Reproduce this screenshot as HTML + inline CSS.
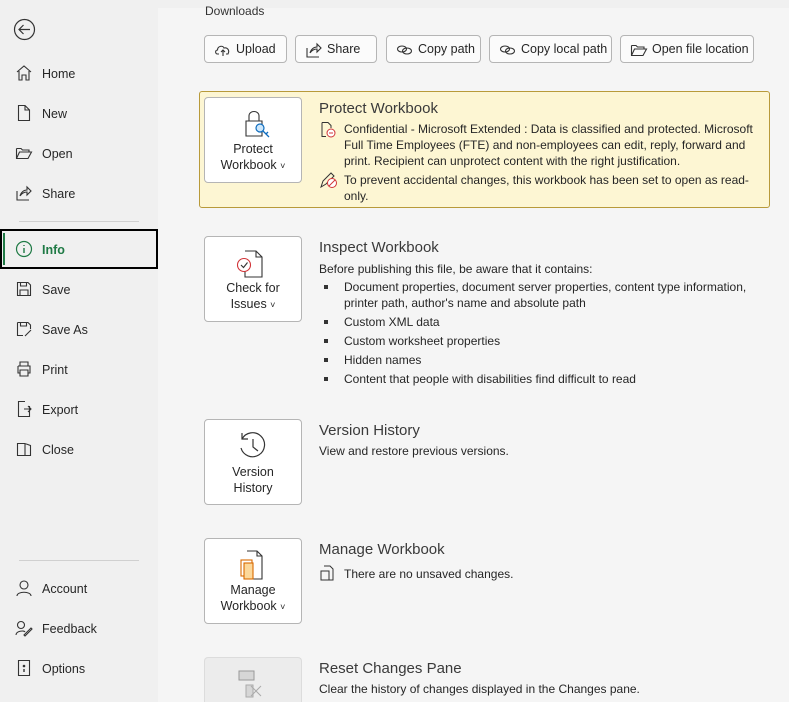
<!DOCTYPE html><html><head><style>
*{margin:0;padding:0;box-sizing:border-box}
html{width:789px;height:702px;overflow:hidden}
body{width:789px;height:702px;overflow:hidden;background:#f0f0f0;font-family:"Liberation Sans",sans-serif;color:#262626;position:relative}
.side{position:absolute;left:0;top:0;width:158px;height:702px;background:#f0f0f0}
.main{position:absolute;left:158px;top:8px;width:631px;height:694px;background:#f5f5f5}
.it{position:absolute;left:42px;font-size:12.5px}
.ic{position:absolute;left:15px}
.sep{position:absolute;left:19px;width:120px;height:1px;background:#d0d0d0}
.btn{position:absolute;top:35px;height:28px;border:1px solid #b5b5b5;border-radius:4px;background:#fbfbfb;font-size:12.5px;line-height:27px;padding-left:31px}
.btn svg{position:absolute;left:9px;top:6px}
.tile{position:absolute;left:204px;width:98px;height:86px;border:1px solid #b5b5b5;border-radius:4px;background:#fff;text-align:center;font-size:12.5px;line-height:16px}
.tile .lb{position:absolute;bottom:8px;left:0;right:0}
.cv{font-size:9px}
.t{position:absolute;left:319px;font-size:15px;color:#3a3a3a}
.p{position:absolute;left:319px;font-size:12px;line-height:16px}
.b{position:absolute;left:344px;font-size:12px;line-height:16px}
.dot{position:absolute;left:324px;width:4px;height:4px;background:#333}
</style></head><body>
<div class="side">
<svg style="position:absolute;left:13px;top:18px" width="23" height="23"><circle cx="11.5" cy="11.5" r="10" fill="none" stroke="#333" stroke-width="1.2"/><path d="M17 11.5H6M10.5 7L6 11.5L10.5 16" fill="none" stroke="#333" stroke-width="1.2"/></svg>
<svg class="ic" style="top:64px" width="18" height="18"><path d="M2 8L9 2L16 8M4 7V16H7V11H11V16H14V7" fill="none" stroke="#333" stroke-width="1.1"/></svg><div class="it" style="top:67px">Home</div>
<svg class="ic" style="top:104px" width="18" height="18"><path d="M3.5 1.5H10L14.5 6V16.5H3.5ZM10 1.5V6H14.5" fill="none" stroke="#333" stroke-width="1.1"/></svg><div class="it" style="top:107px">New</div>
<svg class="ic" style="top:144px" width="18" height="18"><path d="M1.5 4.5H6L7.5 6H14V8M1.5 4.5V14.5H13L16.5 8H4.5L1.5 14.5" fill="none" stroke="#333" stroke-width="1.1"/></svg><div class="it" style="top:147px">Open</div>
<svg class="ic" style="top:184px" width="18" height="18"><path d="M2 7V16H14M5 12C6 8 9 6 12 6V3L16 7L12 11V8C9 8 7 9 5 12" fill="none" stroke="#333" stroke-width="1.1"/></svg><div class="it" style="top:187px">Share</div>
<div class="sep" style="top:221px"></div>
<div style="position:absolute;left:0;top:229px;width:158px;height:40px;border:2px solid #000"></div>
<div style="position:absolute;left:3px;top:233px;width:2px;height:32px;background:#1f7a45"></div>
<svg class="ic" style="top:240px" width="18" height="18"><circle cx="9" cy="9" r="7.5" fill="none" stroke="#1f7a45" stroke-width="1.2"/><path d="M9 8V13M9 5V6" stroke="#1f7a45" stroke-width="1.4"/></svg><div class="it" style="top:243px;color:#1f7a45;font-weight:bold">Info</div>
<svg class="ic" style="top:280px" width="18" height="18"><path d="M2.5 2.5H13L15.5 5V15.5H2.5ZM5.5 2.5V6H11.5V2.5M5 15.5V10H13V15.5" fill="none" stroke="#333" stroke-width="1.1"/></svg><div class="it" style="top:283px">Save</div>
<svg class="ic" style="top:320px" width="18" height="18"><path d="M2.5 2.5H13L15.5 5V9M2.5 2.5V15.5H8M5.5 2.5V6H11.5V2.5M10 16L16 10" fill="none" stroke="#333" stroke-width="1.1"/></svg><div class="it" style="top:323px">Save As</div>
<svg class="ic" style="top:360px" width="18" height="18"><path d="M5 6V2H13V6M3 6H15V13H13M5 13H3V6M5 10H13V16H5Z" fill="none" stroke="#333" stroke-width="1.1"/></svg><div class="it" style="top:363px">Print</div>
<svg class="ic" style="top:400px" width="18" height="18"><path d="M10 1.5H3.5V16.5H14.5V6M9 9H16M13 6L16 9L13 12" fill="none" stroke="#333" stroke-width="1.1"/></svg><div class="it" style="top:403px">Export</div>
<svg class="ic" style="top:440px" width="18" height="18"><path d="M2.5 3.5H10V15.5H2.5ZM10 3.5L15.5 5.5V15.5H10" fill="none" stroke="#333" stroke-width="1.1"/></svg><div class="it" style="top:443px">Close</div>
<div class="sep" style="top:560px"></div>
<svg class="ic" style="top:579px" width="18" height="18"><circle cx="9" cy="6" r="4" fill="none" stroke="#333" stroke-width="1.1"/><path d="M2 17C2 12 16 12 16 17" fill="none" stroke="#333" stroke-width="1.1"/></svg><div class="it" style="top:582px">Account</div>
<svg class="ic" style="top:619px" width="18" height="18"><circle cx="6" cy="6" r="3.5" fill="none" stroke="#333" stroke-width="1.1"/><path d="M1 16C1 12 9 11 10 13M9 16L16 9L17 10L10 17Z" fill="none" stroke="#333" stroke-width="1.1"/></svg><div class="it" style="top:622px">Feedback</div>
<svg class="ic" style="top:659px" width="18" height="18"><path d="M3.5 1.5H14.5V16.5H3.5Z" fill="none" stroke="#333" stroke-width="1.1"/><circle cx="9" cy="7" r="1.3" fill="#333"/><path d="M9 10V13" stroke="#333" stroke-width="1.4"/></svg><div class="it" style="top:662px">Options</div>
</div>
<div class="main"></div>
<div style="position:absolute;left:205px;top:4px;font-size:12px;color:#333">Downloads</div>
<div class="btn" style="left:204px;width:83px"><svg width="18" height="16"><path d="M5 12H3.5C1 12 1 8 3.5 8C3.5 4 9 3 10 6C13 5 16 8 14 12H12M9 14V8M7 10L9 8L11 10" fill="none" stroke="#333" stroke-width="1.1"/></svg>Upload</div>
<div class="btn" style="left:295px;width:82px"><svg width="18" height="16"><path d="M2 6V15H14M5 11C6 7 9 5 12 5V2L16 6L12 10V7C9 7 7 8 5 11" fill="none" stroke="#333" stroke-width="1.1"/></svg>Share</div>
<div class="btn" style="left:386px;width:95px"><svg width="18" height="16"><ellipse cx="6" cy="7" rx="4.5" ry="3" fill="none" stroke="#333" stroke-width="1.1"/><ellipse cx="11" cy="9" rx="4.5" ry="3" fill="none" stroke="#333" stroke-width="1.1"/></svg>Copy path</div>
<div class="btn" style="left:489px;width:123px"><svg width="18" height="16"><ellipse cx="6" cy="7" rx="4.5" ry="3" fill="none" stroke="#333" stroke-width="1.1"/><ellipse cx="11" cy="9" rx="4.5" ry="3" fill="none" stroke="#333" stroke-width="1.1"/></svg>Copy local path</div>
<div class="btn" style="left:620px;width:134px"><svg width="18" height="16"><path d="M1.5 3.5H6L7.5 5H14V7M1.5 3.5V13.5H13L16.5 7H4.5L1.5 13.5" fill="none" stroke="#333" stroke-width="1.1"/></svg>Open file location</div>

<div style="position:absolute;left:199px;top:91px;width:571px;height:117px;background:#fdf6d3;border:1px solid #b89a3a;border-radius:3px"></div>
<div class="tile" style="top:97px"><svg style="position:absolute;left:37px;top:11px" width="32" height="32"><path d="M7 12V7C7 1 17 1 17 7V12M4 12H20V27H4Z" fill="none" stroke="#333" stroke-width="1.1"/><circle cx="18" cy="19" r="4" fill="#cde7fb" stroke="#0f6cbd" stroke-width="1.2"/><path d="M21 22L27 28M24 25L26 23" stroke="#0f6cbd" stroke-width="1.3"/></svg><div class="lb">Protect<br>Workbook <span class="cv">˅</span></div></div>
<div class="t" style="top:100px">Protect Workbook</div>
<svg style="position:absolute;left:320px;top:121px" width="18" height="18"><path d="M2 1.5H8L11 4.5V7M2 1.5V15.5H6" fill="none" stroke="#333" stroke-width="1"/><circle cx="11" cy="12" r="4" fill="#fff" stroke="#d13438"/><path d="M9 12H13" stroke="#d13438"/></svg>
<div class="b" style="top:121px;width:420px">Confidential - Microsoft Extended : Data is classified and protected. Microsoft Full Time Employees (FTE) and non-employees can edit, reply, forward and print. Recipient can unprotect content with the right justification.</div>
<svg style="position:absolute;left:319px;top:170px" width="20" height="20"><path d="M2 17L4 11L12 3L15 6L7 14Z" fill="none" stroke="#333" stroke-width="1"/><circle cx="13" cy="13" r="4.5" fill="#fff" stroke="#d13438"/><path d="M10 16L16 10" stroke="#d13438"/></svg>
<div class="b" style="top:172px;width:420px">To prevent accidental changes, this workbook has been set to open as read-only.</div>

<div class="tile" style="top:236px"><svg style="position:absolute;left:30px;top:12px" width="32" height="32"><path d="M10 2H21L27 8V28H10V20M21 2V8H27" fill="none" stroke="#333" stroke-width="1.1"/><circle cx="9" cy="16" r="6.5" fill="#fff" stroke="#d13438" stroke-width="1.1"/><path d="M6 16L8.5 18.5L12.5 13.5" fill="none" stroke="#333" stroke-width="1.1"/></svg><div class="lb">Check for<br>Issues <span class="cv">˅</span></div></div>
<div class="t" style="top:239px">Inspect Workbook</div>
<div class="p" style="top:261px">Before publishing this file, be aware that it contains:</div>
<div class="dot" style="top:285px"></div><div class="b" style="top:279px;width:420px">Document properties, document server properties, content type information, printer path, author's name and absolute path</div>
<div class="dot" style="top:320px"></div><div class="b" style="top:314px">Custom XML data</div>
<div class="dot" style="top:339px"></div><div class="b" style="top:333px">Custom worksheet properties</div>
<div class="dot" style="top:358px"></div><div class="b" style="top:352px">Hidden names</div>
<div class="dot" style="top:377px"></div><div class="b" style="top:371px">Content that people with disabilities find difficult to read</div>

<div class="tile" style="top:419px"><svg style="position:absolute;left:32px;top:10px" width="32" height="32"><path d="M5 9A12 12 0 1 1 4 18M5 3V9H11M16 9V17L21 21" fill="none" stroke="#333" stroke-width="1.2"/></svg><div class="lb">Version<br>History</div></div>
<div class="t" style="top:422px">Version History</div>
<div class="p" style="top:443px">View and restore previous versions.</div>

<div class="tile" style="top:538px"><svg style="position:absolute;left:34px;top:10px" width="32" height="32"><path d="M8 2H18L23 7V30H14M18 2V7H23" fill="none" stroke="#333" stroke-width="1.1"/><rect x="2" y="11" width="11" height="16" fill="none" stroke="#d86a00" stroke-width="1.1"/><rect x="5" y="14" width="9" height="16" fill="#fcd89a" stroke="#d86a00" stroke-width="1.1"/></svg><div class="lb">Manage<br>Workbook <span class="cv">˅</span></div></div>
<div class="t" style="top:541px">Manage Workbook</div>
<svg style="position:absolute;left:320px;top:565px" width="14" height="16"><path d="M4 1H10L13 4V15H9M1 6H9V15H1Z" fill="none" stroke="#333" stroke-width="1"/></svg>
<div class="b" style="top:566px">There are no unsaved changes.</div>

<div class="tile" style="top:657px;height:45px;border-bottom:none;border-radius:4px 4px 0 0;background:#ececec;border-color:#dcdcdc"><svg style="position:absolute;left:32px;top:12px" width="32" height="30"><rect x="2" y="1" width="15" height="9" fill="#d6d6d6" stroke="#999"/><path d="M9 15H16V27H9ZM14 16L24 26M24 16L14 26" fill="#d6d6d6" stroke="#aaa"/></svg></div>
<div class="t" style="top:660px">Reset Changes Pane</div>
<div class="p" style="top:681px">Clear the history of changes displayed in the Changes pane.</div>
</body></html>
